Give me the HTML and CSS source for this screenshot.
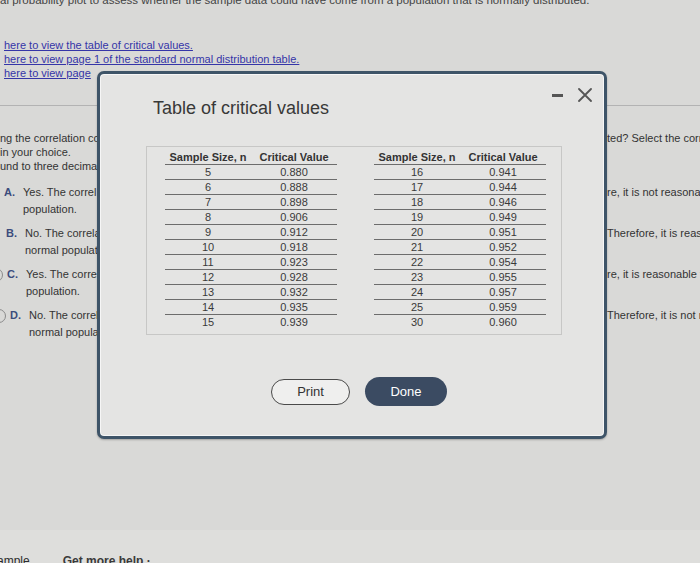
FILE: index.html
```html
<!DOCTYPE html>
<html lang="en">
<head>
<meta charset="utf-8">
<title>Table of critical values</title>
<link rel="stylesheet" href="styles.css">
</head>
<body>
<div class="page">
  <div class="intro">al probability plot to assess whether the sample data could have come from a population that is normally distributed.</div>

  <div class="links">
    <a class="link">here to view the table of critical values.</a>
    <a class="link">here to view page 1 of the standard normal distribution table.</a>
    <a class="link">here to view page</a>
  </div>

  <div class="sep"></div>

  <div class="question">
    <div class="qrow">
      <div class="qleft">ng the correlation co</div>
      <div class="qright">ted? Select the correct choice below</div>
    </div>
    <div class="qrow">
      <div class="qleft">in your choice.</div>
      <div class="qright"></div>
    </div>
    <div class="qrow">
      <div class="qleft">und to three decima</div>
      <div class="qright"></div>
    </div>
  </div>

  <div class="options">
    <div class="opt opt-a">
      <div class="optleft">
        <span class="letter">A.</span>
        <div class="opttext"><div>Yes. The correl</div><div>population.</div></div>
      </div>
      <div class="qright">re, it is not reasonable to conclude</div>
    </div>
    <div class="opt opt-b">
      <div class="optleft">
        <span class="letter">B.</span>
        <div class="opttext"><div>No. The correla</div><div>normal populati</div></div>
      </div>
      <div class="qright">Therefore, it is reasonable to conclude</div>
    </div>
    <div class="opt opt-c">
      <div class="optleft">
        <span class="radio"></span>
        <span class="letter">C.</span>
        <div class="opttext"><div>Yes. The correl</div><div>population.</div></div>
      </div>
      <div class="qright">re, it is reasonable to conclude</div>
    </div>
    <div class="opt opt-d">
      <div class="optleft">
        <span class="radio"></span>
        <span class="letter">D.</span>
        <div class="opttext"><div>No. The correla</div><div>normal populati</div></div>
      </div>
      <div class="qright">Therefore, it is not reasonable</div>
    </div>
  </div>

  <div class="footer">
    <span class="foot-left">ample</span>
    <span class="foot-help">Get more help ·</span>
  </div>

  <div class="modal">
    <div class="modal-head">
      <h1 class="modal-title">Table of critical values</h1>
      <div class="win-ctrls">
        <span class="minimize"></span>
        <svg class="close" width="14" height="14" viewBox="0 0 14 14" aria-hidden="true">
          <path d="M1 1 L13 13 M13 1 L1 13" stroke="#555" stroke-width="1.8" fill="none" stroke-linecap="round"/>
        </svg>
      </div>
    </div>

    <div class="table-box">
      <div class="cv">
        <div class="cv-row cv-head"><span>Sample Size, n</span><span>Critical Value</span></div>
        <div class="cv-row"><span>5</span><span>0.880</span></div>
        <div class="cv-row"><span>6</span><span>0.888</span></div>
        <div class="cv-row"><span>7</span><span>0.898</span></div>
        <div class="cv-row"><span>8</span><span>0.906</span></div>
        <div class="cv-row"><span>9</span><span>0.912</span></div>
        <div class="cv-row"><span>10</span><span>0.918</span></div>
        <div class="cv-row"><span>11</span><span>0.923</span></div>
        <div class="cv-row"><span>12</span><span>0.928</span></div>
        <div class="cv-row"><span>13</span><span>0.932</span></div>
        <div class="cv-row"><span>14</span><span>0.935</span></div>
        <div class="cv-row"><span>15</span><span>0.939</span></div>
      </div>
      <div class="cv">
        <div class="cv-row cv-head"><span>Sample Size, n</span><span>Critical Value</span></div>
        <div class="cv-row"><span>16</span><span>0.941</span></div>
        <div class="cv-row"><span>17</span><span>0.944</span></div>
        <div class="cv-row"><span>18</span><span>0.946</span></div>
        <div class="cv-row"><span>19</span><span>0.949</span></div>
        <div class="cv-row"><span>20</span><span>0.951</span></div>
        <div class="cv-row"><span>21</span><span>0.952</span></div>
        <div class="cv-row"><span>22</span><span>0.954</span></div>
        <div class="cv-row"><span>23</span><span>0.955</span></div>
        <div class="cv-row"><span>24</span><span>0.957</span></div>
        <div class="cv-row"><span>25</span><span>0.959</span></div>
        <div class="cv-row"><span>30</span><span>0.960</span></div>
      </div>
    </div>

    <div class="actions">
      <button class="btn btn-print">Print</button>
      <button class="btn btn-done">Done</button>
    </div>
  </div>
</div>
</body>
</html>
```

FILE: styles.css
```css
html, body {
  margin: 0;
  padding: 0;
  height: 100%;
  overflow: hidden;
}

body {
  background: #d9d9d7;
  font-family: "Liberation Sans", Arial, sans-serif;
  color: #333;
}

.page {
  position: relative;
  height: 563px;
  display: flex;
  flex-direction: column;
}

.intro {
  font-size: 11.5px;
  line-height: 14px;
  margin-top: -7px;
  white-space: nowrap;
  color: #444;
}

.links {
  margin-top: 31px;
  display: flex;
  flex-direction: column;
  align-items: flex-start;
  padding-left: 4px;
  font-size: 11px;
  line-height: 14px;
}

.link {
  color: #3535a8;
  text-decoration: underline;
  white-space: nowrap;
}

.sep {
  margin-top: 25px;
  height: 1px;
  background: #b3b3b3;
}

.question {
  margin-top: 25px;
  font-size: 11px;
  line-height: 14px;
}

.qrow {
  display: grid;
  grid-template-columns: 1fr 93px;
}

.qleft,
.qright {
  white-space: nowrap;
  overflow: hidden;
  font-size: 11px;
}

.qright {
  color: #333;
}

.options {
  margin-top: 11px;
  display: flex;
  flex-direction: column;
  gap: 7px;
}

.opt {
  display: grid;
  grid-template-columns: 1fr 93px;
  font-size: 11px;
  line-height: 17px;
}

.optleft {
  display: flex;
  align-items: flex-start;
  overflow: hidden;
  white-space: nowrap;
}

.opt-a .optleft { padding-left: 4px; }
.opt-b .optleft { padding-left: 6px; }
.opt-c .optleft { padding-left: 7px; }
.opt-d .optleft { padding-left: 10px; }

.letter {
  width: 19px;
  flex: none;
  font-weight: bold;
  color: #3b4c7c;
}

.radio {
  flex: none;
  width: 12px;
  height: 12px;
  margin: 2px 4px 0 -18px;
  border: 1.5px solid #8a8a8a;
  border-radius: 50%;
}

.footer {
  margin-top: auto;
  height: 33px;
  box-sizing: border-box;
  padding-top: 24px;
  background: #dededc;
  display: flex;
  gap: 33px;
  font-size: 12px;
  line-height: 14px;
  color: #2d2d2d;
  white-space: nowrap;
}

.foot-left {
  margin-left: -3px;
}

.foot-help {
  font-weight: bold;
  color: #3a3a3a;
}

/* Modal window */
.modal {
  position: absolute;
  left: 97px;
  top: 71px;
  width: 510px;
  height: 368px;
  box-sizing: border-box;
  border: 3px solid #3e5468;
  border-radius: 7px;
  background: #e4e4e3;
  box-shadow: inset 0 0 0 1px #f6f6f6, 0 1px 2px rgba(0, 0, 0, 0.25);
}

.modal-head {
  display: flex;
  justify-content: space-between;
  align-items: flex-start;
  padding: 23px 12px 0 53px;
}

.modal-title {
  margin: 0;
  font-size: 18px;
  line-height: 22px;
  font-weight: normal;
  color: #383838;
}

.win-ctrls {
  display: flex;
  align-items: center;
  gap: 15px;
  margin-top: -9px;
  height: 14px;
}

.minimize {
  width: 11px;
  height: 3px;
  background: #555;
  margin-top: 1px;
}

.close {
  display: block;
}

.table-box {
  margin: 27px 0 0 46px;
  width: 416px;
  box-sizing: border-box;
  border: 1px solid #c7c7c6;
  padding: 4px 0 4px 18px;
  display: flex;
  gap: 37px;
}

.cv {
  width: 172px;
  display: flex;
  flex-direction: column;
}

.cv-row {
  display: grid;
  grid-template-columns: 1fr 1fr;
  height: 15px;
  box-sizing: border-box;
  border-bottom: 1px solid #6c6c6c;
  font-size: 11px;
  line-height: 14px;
  text-align: center;
  color: #3a3a3a;
}

.cv-row:last-child {
  border-bottom: none;
}

.cv-head {
  height: 14px;
  line-height: 13px;
  font-weight: bold;
  color: #333;
  white-space: nowrap;
}

.actions {
  margin-top: 42px;
  padding-left: 171px;
  display: flex;
  align-items: center;
  gap: 15px;
}

.btn {
  font-family: "Liberation Sans", Arial, sans-serif;
  font-size: 13px;
  padding: 0;
  cursor: pointer;
}

.btn-print {
  width: 79px;
  height: 26px;
  border: 1.5px solid #4a4a4a;
  border-radius: 13px;
  background: #efefee;
  color: #333;
}

.btn-done {
  width: 82px;
  height: 29px;
  border: none;
  border-radius: 15px;
  background: #3b4b62;
  color: #fff;
}
```
